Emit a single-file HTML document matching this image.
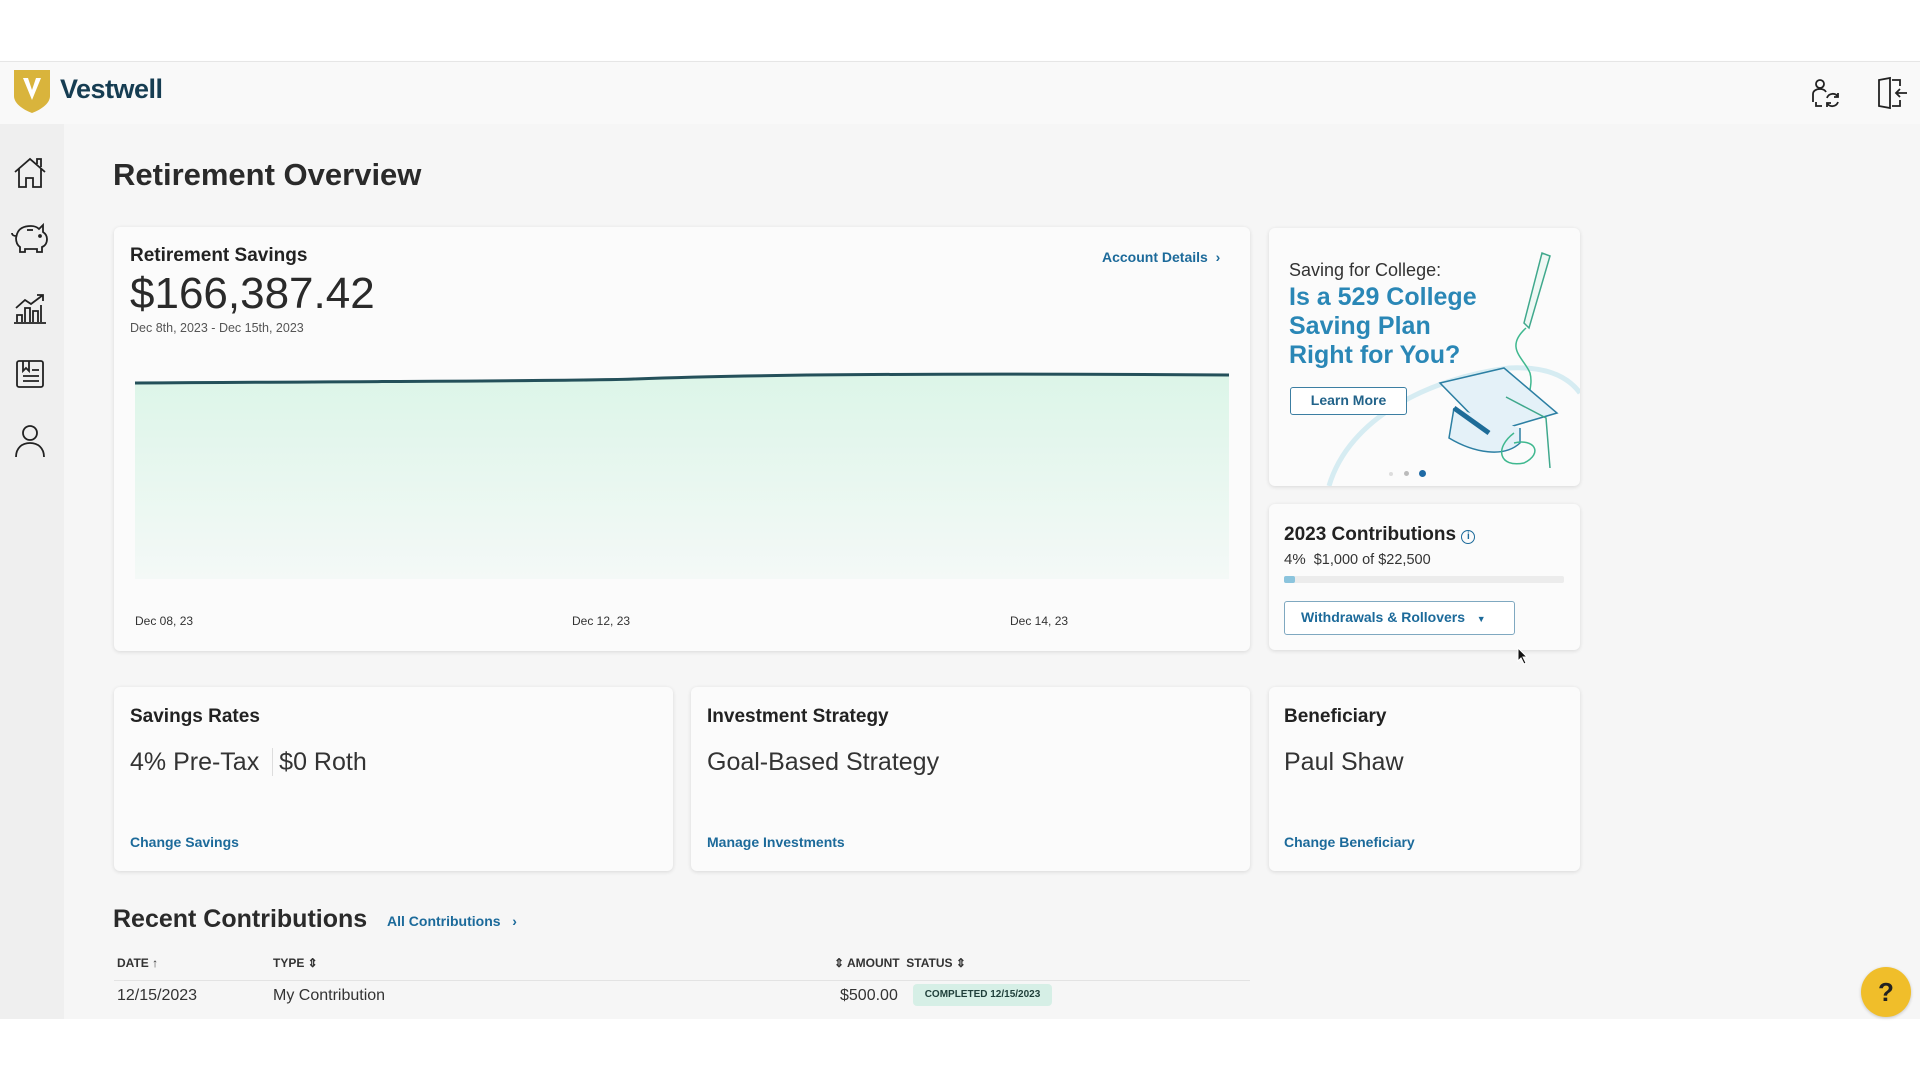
<!DOCTYPE html>
<html><head><meta charset="utf-8"><style>
*{box-sizing:border-box;margin:0;padding:0}
body{width:1920px;height:1080px;background:#fff;font-family:"Liberation Sans",sans-serif;color:#222;position:relative;overflow:hidden}
.abs{position:absolute}
.hdr{left:0;top:61px;width:1920px;height:63px;background:#f9f9f9;border-top:1px solid #e6e6e6;box-shadow:0 2px 4px rgba(0,0,0,.06)}
.side{left:0;top:124px;width:64px;height:895px;background:#efefef}
.main{left:64px;top:124px;width:1856px;height:895px;background:#f6f6f6}
.card{position:absolute;background:#fbfbfb;border-radius:6px;box-shadow:0 1px 4px rgba(0,0,0,.12)}
.link{color:#1c6a9a;font-weight:bold;font-size:14px}
.ct{font-size:19px;font-weight:bold;color:#222}
.val{font-size:25px;color:#333}
</style></head><body>
<div class="abs hdr">
 <svg class="abs" style="left:12px;top:6px" width="40" height="46" viewBox="0 0 40 46"><path d="M2 2H38V28C38 36 28 42 20 45C12 42 2 36 2 28Z" fill="#d9b43c"/><path d="M11 10L20 32L29 10H24L20 22L16 10Z" fill="#fff"/></svg>
 <div class="abs" style="left:60px;top:12px;font-size:27px;font-weight:bold;color:#163d52;letter-spacing:-0.5px">Vestwell</div>
 <svg class="abs" style="left:1810px;top:16px" width="32" height="32" viewBox="0 0 32 32" fill="none" stroke="#222" stroke-width="1.8"><circle cx="10" cy="6" r="4"/><path d="M3 24V16C3 13 6 11 10 11C13 11 15 12 16 14M6 24V28H12"/><path d="M17 20A6 6 0 0 1 28 19M28 24A6 6 0 0 1 17 25"/><path d="M28 15V19H24M17 29V25H21"/></svg>
 <svg class="abs" style="left:1876px;top:14px" width="34" height="34" viewBox="0 0 34 34" fill="none" stroke="#222" stroke-width="1.8"><path d="M3 4L14 2V32L3 30Z"/><path d="M16 4H24V10M24 24V30H16"/><path d="M31 17H20M24 13L20 17L24 21"/></svg>
</div>
<div class="abs side">
 <svg class="abs" style="left:12px;top:32px" width="36" height="34" viewBox="0 0 36 34" fill="none" stroke="#222" stroke-width="1.8"><path d="M3 16L18 3L33 16M7 13V31H14V22H21V31H29V13M25 8V3H29V11"/></svg>
 <svg class="abs" style="left:10px;top:98px" width="40" height="32" viewBox="0 0 40 32" fill="none" stroke="#222" stroke-width="1.8"><path d="M6 14C4 14 2 13 2 11M7 12C9 6 15 4 21 4C24 4 27 5 29 7L33 3V10C36 12 37 15 37 17C37 21 35 24 32 25V30H27V27H15V30H10V25C7 23 6 19 6 16Z"/><circle cx="30" cy="14" r="1" fill="#222"/><path d="M17 8H23"/></svg>
 <svg class="abs" style="left:12px;top:167px" width="36" height="34" viewBox="0 0 36 34" fill="none" stroke="#222" stroke-width="1.8"><path d="M2 32H34M5 31V24H10V31M13 31V17H18V31M21 31V20H26V31M29 31V14"/><path d="M4 17L13 9L19 13L31 4M25 4H31V10"/></svg>
 <svg class="abs" style="left:14px;top:234px" width="32" height="32" viewBox="0 0 32 32" fill="none" stroke="#222" stroke-width="1.8"><rect x="3" y="3" width="26" height="26" rx="2"/><path d="M9 3V13L12 10L15 13V3M18 12H25M9 18H25M9 23H25"/></svg>
 <svg class="abs" style="left:14px;top:300px" width="32" height="34" viewBox="0 0 32 34" fill="none" stroke="#222" stroke-width="1.8"><circle cx="16" cy="9" r="7"/><path d="M2 33C2 24 8 19 16 19C24 19 30 24 30 33"/></svg>
</div>
<div class="abs main"></div>
<div class="abs" style="left:113px;top:157px;font-size:31px;font-weight:bold;color:#2a2a2a">Retirement Overview</div>

<div class="card" style="left:114px;top:227px;width:1136px;height:424px">
 <div class="abs ct" style="left:16px;top:18px">Retirement Savings</div>
 <div class="abs" style="left:16px;top:42px;font-size:44px;color:#2a2a2a">$166,387.42</div>
 <div class="abs" style="left:16px;top:94px;font-size:12.5px;color:#555">Dec 8th, 2023 - Dec 15th, 2023</div>
 <div class="abs link" style="left:988px;top:22px">Account Details &nbsp;›</div>
 <svg class="abs" style="left:20px;top:140px" width="1100" height="220"><defs><linearGradient id="g" x1="0" y1="0" x2="0" y2="1"><stop offset="0" stop-color="#dcf5e8"/><stop offset="1" stop-color="#f4f9f7"/></linearGradient></defs><path d="M1 16C300 14 450 14 500 12C600 8 800 6 1095 8V212H1Z" fill="url(#g)"/><path d="M1 16C300 14 450 14 500 12C600 8 800 6 1095 8" fill="none" stroke="#24505a" stroke-width="3"/></svg>
 <div class="abs" style="left:21px;top:387px;font-size:12px;color:#333">Dec 08, 23</div>
 <div class="abs" style="left:458px;top:387px;font-size:12px;color:#333">Dec 12, 23</div>
 <div class="abs" style="left:896px;top:387px;font-size:12px;color:#333">Dec 14, 23</div>
</div>

<div class="card" style="left:1269px;top:228px;width:311px;height:258px;overflow:hidden">
 <svg class="abs" style="left:0;top:0" width="311" height="258" fill="none"><path d="M60 258C80 190 160 150 240 140C280 138 300 150 311 165" stroke="#d6ecf2" stroke-width="5"/><g transform="translate(45,0)"><path d="M228 25L210 95L215 100L236 28Z" stroke="#3fa88c" stroke-width="1.5" fill="#eef8f4"/><path d="M212 100C190 120 210 130 216 145C220 160 210 170 218 180" stroke="#3fb88f" stroke-width="1.5"/><path d="M126 155L190 140L243 185L175 205Z" stroke="#2c7fa3" stroke-width="1.5" fill="#e4f1f8"/><path d="M140 180L135 210C160 225 190 230 206 215L206 200" stroke="#2c7fa3" stroke-width="1.5" fill="#e4f1f8"/><path d="M140 180L175 205" stroke="#1e6c98" stroke-width="5"/><path d="M192 169L232 190L236 240" stroke="#3fa88c" stroke-width="1.5"/><path d="M200 205C180 220 185 240 210 235C230 225 220 210 200 215" stroke="#3fb88f" stroke-width="1.5"/></g></svg>
 <div class="abs" style="left:20px;top:32px;font-size:18px;color:#333">Saving for College:</div>
 <div class="abs" style="left:20px;top:55px;font-size:25px;line-height:29px;font-weight:bold;color:#2a87b6">Is a 529 College<br>Saving Plan<br>Right for You?</div>
 <div class="abs" style="left:21px;top:159px;width:117px;height:28px;border:1.5px solid #3c7ea2;border-radius:3px;background:#fff;color:#22638a;font-size:14px;font-weight:bold;text-align:center;line-height:25px">Learn More</div>
 <div class="abs" style="left:120px;top:244px;width:4px;height:4px;border-radius:50%;background:#ddd"></div>
 <div class="abs" style="left:135px;top:243px;width:5px;height:5px;border-radius:50%;background:#bbb"></div>
 <div class="abs" style="left:150px;top:242px;width:7px;height:7px;border-radius:50%;background:#1f6aa5"></div>
</div>

<div class="card" style="left:1269px;top:504px;width:311px;height:146px">
 <div class="abs ct" style="left:15px;top:20px">2023 Contributions <span style="display:inline-block;width:14px;height:14px;border:1.5px solid #1c6a9a;border-radius:50%;font-size:10px;color:#1c6a9a;text-align:center;line-height:11px;vertical-align:1px">i</span></div>
 <div class="abs" style="left:15px;top:47px;font-size:14.5px;color:#333"><b style="font-weight:normal;font-size:15px">4%</b>&nbsp; $1,000 of $22,500</div>
 <div class="abs" style="left:15px;top:72px;width:280px;height:7px;background:#ececec;border-radius:2px"><div style="width:11px;height:7px;background:#8bc4dd;border-radius:2px"></div></div>
 <div class="abs" style="left:15px;top:97px;width:231px;height:34px;border:1.5px solid #7fa8c0;border-radius:3px;background:#fff;color:#1c6a9a;font-size:14px;font-weight:bold;line-height:31px;padding-left:16px">Withdrawals &amp; Rollovers &nbsp;&nbsp;<span style="font-size:9px">▼</span></div>
</div>
<svg class="abs" style="left:1517px;top:647px" width="12" height="18" viewBox="0 0 12 18"><path d="M1 1V14L4 11L7 17L9 16L6 10H10Z" fill="#111" stroke="#fff" stroke-width="1"/></svg>

<div class="card" style="left:114px;top:687px;width:559px;height:184px">
 <div class="abs ct" style="left:16px;top:19px">Savings Rates</div>
 <div class="abs val" style="left:16px;top:61px">4% Pre-Tax <span style="display:inline-block;width:1px;height:28px;background:#ddd;vertical-align:-6px;margin:0 6px"></span>$0 Roth</div>
 <div class="abs link" style="left:16px;top:147px">Change Savings</div>
</div>
<div class="card" style="left:691px;top:687px;width:559px;height:184px">
 <div class="abs ct" style="left:16px;top:19px">Investment Strategy</div>
 <div class="abs val" style="left:16px;top:61px">Goal-Based Strategy</div>
 <div class="abs link" style="left:16px;top:147px">Manage Investments</div>
</div>
<div class="card" style="left:1269px;top:687px;width:311px;height:184px">
 <div class="abs ct" style="left:15px;top:19px">Beneficiary</div>
 <div class="abs val" style="left:15px;top:61px">Paul Shaw</div>
 <div class="abs link" style="left:15px;top:147px">Change Beneficiary</div>
</div>

<div class="abs" style="left:113px;top:905px;font-size:25px;font-weight:bold;color:#2a2a2a">Recent Contributions</div>
<div class="abs link" style="left:387px;top:913px">All Contributions &nbsp;&nbsp;›</div>
<div class="abs" style="left:117px;top:956px;font-size:12px;font-weight:bold;color:#333">DATE ↑</div>
<div class="abs" style="left:273px;top:956px;font-size:12px;font-weight:bold;color:#333">TYPE ⇕</div>
<div class="abs" style="left:834px;top:956px;font-size:12px;font-weight:bold;color:#333">⇕ AMOUNT &nbsp;STATUS ⇕</div>
<div class="abs" style="left:114px;top:980px;width:1136px;height:1px;background:#e3e3e3"></div>
<div class="abs" style="left:117px;top:987px;font-size:16px;color:#333">12/15/2023</div>
<div class="abs" style="left:273px;top:987px;font-size:16px;color:#333">My Contribution</div>
<div class="abs" style="left:840px;top:987px;font-size:16px;color:#333">$500.00</div>
<div class="abs" style="left:913px;top:984px;width:139px;height:22px;background:#d6efe6;border-radius:4px;font-size:10px;font-weight:bold;color:#1f3f3a;text-align:center;line-height:22px">COMPLETED 12/15/2023</div>
<div class="abs" style="left:0;top:1019px;width:1920px;height:61px;background:#fff"></div>
<div class="abs" style="left:1861px;top:967px;width:50px;height:50px;border-radius:50%;background:#f0be2a;color:#222;font-size:26px;font-weight:bold;text-align:center;line-height:50px;box-shadow:0 1px 3px rgba(0,0,0,.2)">?</div>
</body></html>
